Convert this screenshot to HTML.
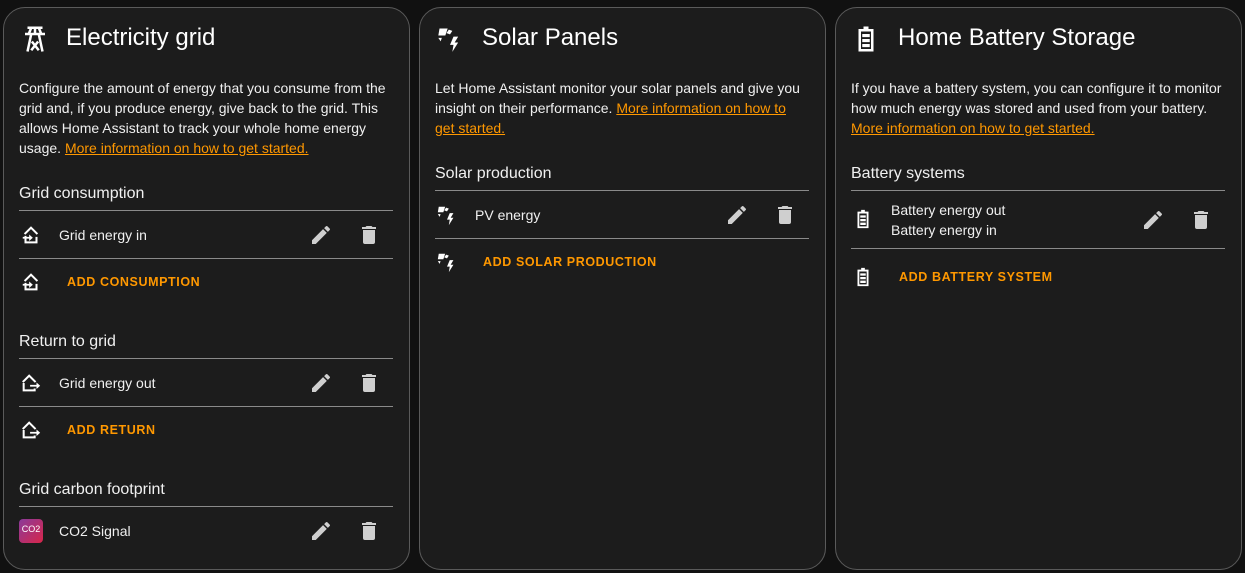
<!DOCTYPE html>
<html><head><meta charset="utf-8"><style>
*{margin:0;padding:0;box-sizing:border-box}
body{width:1245px;height:573px;background:#111111;font-family:"Liberation Sans",sans-serif;color:#e1e1e1;position:relative;overflow:hidden}
.card{position:absolute;top:7px;width:407px;height:563px;background:#1c1c1c;border:1px solid #5a5a5a;border-radius:22px}
.a{position:absolute;white-space:nowrap}
.t{font-size:24px;color:#fff}
.d{font-size:14px;line-height:20px;color:#f0f0f0;white-space:normal}
.d a{color:#ff9800;text-decoration:underline}
.h{font-size:16px;color:#f0f0f0}
.r{font-size:14px;color:#f0f0f0}
.b{font-size:12.5px;font-weight:bold;color:#ff9800;letter-spacing:0.6px}
.ln{position:absolute;height:1px;background:#8a8a8a;width:374px}
svg{position:absolute}
</style></head><body>
<svg width="0" height="0" style="position:absolute"><defs>
<symbol id="pen" viewBox="0 0 24 24"><path fill="#cfcfcf" d="M20.71,7.04C21.1,6.65 21.1,6 20.71,5.63L18.37,3.29C18,2.9 17.35,2.9 16.96,3.29L15.12,5.12L18.87,8.87M3,17.25V21H6.75L17.81,9.930L14.06,6.18L3,17.25Z"/></symbol>
<symbol id="del" viewBox="0 0 24 24"><path fill="#cfcfcf" d="M19,4H15.5L14.5,3H9.5L8.5,4H5V6H19M6,19A2,2 0 0,0 8,21H16A2,2 0 0,0 18,19V7H6V19Z"/></symbol>
<symbol id="imp" viewBox="0 0 24 24"><path fill="none" stroke="#fff" stroke-width="2.2" d="M5,11 L12,4 L19,11 M6,13V20H18V14"/><path fill="#fff" d="M3,14H10V11.5L14,15L10,18.5V16H3Z"/></symbol>
<symbol id="exp" viewBox="0 0 24 24"><path fill="none" stroke="#fff" stroke-width="2.2" d="M3,11 L10,4 L17,11 M4,12V20H16V18"/><path fill="#fff" d="M11,14H18V11.5L22,15L18,18.5V16H11Z"/></symbol>
<symbol id="sol" viewBox="0 0 24 24"><path fill="#fff" d="M3,3H10L8,9H2Z M11,4L14,5L12,8L9,7Z M2,11H5L4,14Z M15,10H19L16,15H19L14,23L15,17H12Z"/></symbol>
<symbol id="bat" viewBox="0 0 24 24"><path fill="none" stroke="#fff" stroke-width="2" d="M7,5H17V21H7Z"/><path fill="#fff" d="M10,2H14V5H10Z M9,8H15V10.5H9Z M9,12H15V14.5H9Z M9,16H15V18.5H9Z"/></symbol>
<symbol id="tow" viewBox="0 0 24 24"><path fill="none" stroke="#fff" stroke-width="2" d="M6,3H18 M4,8H20 M12,3V8 M9,3L7,8 M15,3L17,8 M9,8L6,22 M15,8L18,22 M9.5,14L15,21 M14.5,14L9,21"/></symbol>
</defs></svg>

<div class="card" style="left:3px"></div>
<div class="card" style="left:419px"></div>
<div class="card" style="left:835px"></div>

<!-- Card 1 -->
<svg style="left:20px;top:24px" width="30" height="30"><use href="#tow"/></svg>
<div class="a t" style="left:66px;top:24px">Electricity grid</div>
<div class="a d" style="left:19px;top:78px;width:380px">Configure the amount of energy that you consume from the grid and, if you produce energy, give back to the grid. This allows Home Assistant to track your whole home energy usage. <a>More information on how to get started.</a></div>
<div class="a h" style="left:19px;top:185px">Grid consumption</div>
<div class="ln" style="left:19px;top:210px"></div>
<svg style="left:20px;top:224px" width="22" height="22"><use href="#imp"/></svg>
<div class="a r" style="left:59px;top:227px">Grid energy in</div>
<svg style="left:309px;top:223px" width="24" height="24"><use href="#pen"/></svg>
<svg style="left:357px;top:223px" width="24" height="24"><use href="#del"/></svg>
<div class="ln" style="left:19px;top:258px"></div>
<svg style="left:20px;top:271px" width="22" height="22"><use href="#imp"/></svg>
<div class="a b" style="left:67px;top:275px">ADD CONSUMPTION</div>

<div class="a h" style="left:19px;top:333px">Return to grid</div>
<div class="ln" style="left:19px;top:358px"></div>
<svg style="left:20px;top:372px" width="22" height="22"><use href="#exp"/></svg>
<div class="a r" style="left:59px;top:375px">Grid energy out</div>
<svg style="left:309px;top:371px" width="24" height="24"><use href="#pen"/></svg>
<svg style="left:357px;top:371px" width="24" height="24"><use href="#del"/></svg>
<div class="ln" style="left:19px;top:406px"></div>
<svg style="left:20px;top:419px" width="22" height="22"><use href="#exp"/></svg>
<div class="a b" style="left:67px;top:423px">ADD RETURN</div>

<div class="a h" style="left:19px;top:481px">Grid carbon footprint</div>
<div class="ln" style="left:19px;top:506px"></div>
<div class="a" style="left:19px;top:519px;width:24px;height:24px;border-radius:4px;background:linear-gradient(135deg,#8a3a9a,#d8264a);color:#fff;font-size:9px;line-height:20px;text-align:center">CO2</div>
<div class="a r" style="left:59px;top:523px">CO2 Signal</div>
<svg style="left:309px;top:519px" width="24" height="24"><use href="#pen"/></svg>
<svg style="left:357px;top:519px" width="24" height="24"><use href="#del"/></svg>

<!-- Card 2 -->
<svg style="left:436px;top:25px" width="28" height="28"><use href="#sol"/></svg>
<div class="a t" style="left:482px;top:24px">Solar Panels</div>
<div class="a d" style="left:435px;top:78px;width:368px">Let Home Assistant monitor your solar panels and give you insight on their performance. <a>More information on how to get started.</a></div>
<div class="a h" style="left:435px;top:165px">Solar production</div>
<div class="ln" style="left:435px;top:190px"></div>
<svg style="left:436px;top:204px" width="22" height="22"><use href="#sol"/></svg>
<div class="a r" style="left:475px;top:207px">PV energy</div>
<svg style="left:725px;top:203px" width="24" height="24"><use href="#pen"/></svg>
<svg style="left:773px;top:203px" width="24" height="24"><use href="#del"/></svg>
<div class="ln" style="left:435px;top:238px"></div>
<svg style="left:436px;top:251px" width="22" height="22"><use href="#sol"/></svg>
<div class="a b" style="left:483px;top:255px">ADD SOLAR PRODUCTION</div>

<!-- Card 3 -->
<svg style="left:851px;top:24px" width="30" height="30"><use href="#bat"/></svg>
<div class="a t" style="left:898px;top:24px">Home Battery Storage</div>
<div class="a d" style="left:851px;top:78px;width:385px">If you have a battery system, you can configure it to monitor how much energy was stored and used from your battery. <a>More information on how to get started.</a></div>
<div class="a h" style="left:851px;top:165px">Battery systems</div>
<div class="ln" style="left:851px;top:190px"></div>
<svg style="left:852px;top:208px" width="22" height="22"><use href="#bat"/></svg>
<div class="a r" style="left:891px;top:202px">Battery energy out</div>
<div class="a r" style="left:891px;top:222px">Battery energy in</div>
<svg style="left:1141px;top:208px" width="24" height="24"><use href="#pen"/></svg>
<svg style="left:1189px;top:208px" width="24" height="24"><use href="#del"/></svg>
<div class="ln" style="left:851px;top:248px"></div>
<svg style="left:852px;top:266px" width="22" height="22"><use href="#bat"/></svg>
<div class="a b" style="left:899px;top:270px">ADD BATTERY SYSTEM</div>
</body></html>
